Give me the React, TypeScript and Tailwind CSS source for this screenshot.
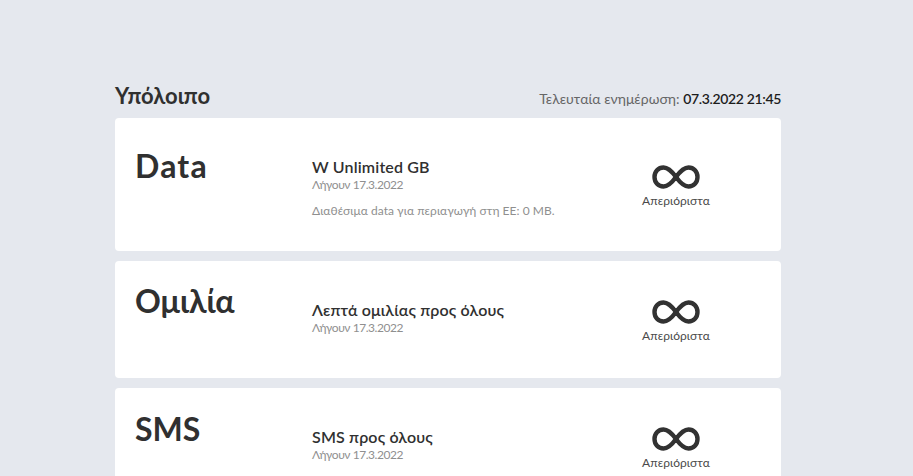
const FONT = "font-['Lato','Noto_Sans',sans-serif]";

function Infinity48() {
  return (
    <svg width="48" height="24" viewBox="0 0 48 24" fill="none" className="block">
      <path
        d="M24 12C20 6.5 16.5 2.5 11.5 2.5C6.2 2.5 2.5 6.7 2.5 12C2.5 17.3 6.2 21.5 11.5 21.5C16.5 21.5 20 17.5 24 12C28 6.5 31.5 2.5 36.5 2.5C41.8 2.5 45.5 6.7 45.5 12C45.5 17.3 41.8 21.5 36.5 21.5C31.5 21.5 28 17.5 24 12Z"
        stroke="#323232"
        strokeWidth="4.4"
      />
    </svg>
  );
}

function Card({
  title,
  name,
  extra,
  height,
  titleTop,
  nameTop,
  iconTop,
}: {
  title: string;
  name: string;
  extra?: string;
  height: string;
  titleTop: string;
  nameTop: string;
  iconTop: string;
}) {
  return (
    <div className={`flex rounded bg-white pl-5 ${height}`}>
      <div className={`w-[177px] shrink-0 ${titleTop}`}>
        <h2 className="text-[32px] leading-[38px] font-bold text-[#303030]">{title}</h2>
      </div>
      <div className={`w-[313px] shrink-0 ${nameTop}`}>
        <div className="text-[16px] leading-[20px] font-semibold tracking-[0.15px] text-[#303030]">{name}</div>
        <div className="text-[12px] leading-[15px] tracking-[-0.45px] text-[#8f8f8f]">Λήγουν 17.3.2022</div>
        {extra && <div className="mt-[11px] text-[12px] leading-[15px] tracking-[0.05px] text-[#8f8f8f]">{extra}</div>}
      </div>
      <div className={`flex w-[102px] shrink-0 flex-col items-center ${iconTop}`}>
        <Infinity48 />
        <div className="mt-[4px] text-[12px] leading-[15px] tracking-[0.05px] text-[#4a4a4a]">Απεριόριστα</div>
      </div>
    </div>
  );
}

export default function App() {
  return (
    <div className={`h-[476px] overflow-hidden bg-[#e5e8ee] pt-[81px] pl-[115px] ${FONT}`}>
      <div className="w-[666px]">
        <div className="mb-[8px] flex h-[29px] items-center justify-between">
          <h1 className="text-[22px] leading-[26px] font-bold text-[#303030]">Υπόλοιπο</h1>
          <div className="pt-[7px] text-[14px] leading-[18px] tracking-[0.05px] text-[#666666]">
            Τελευταία ενημέρωση: <span className="font-semibold tracking-[-0.35px] text-[#1c1c1c]">07.3.2022 21:45</span>
          </div>
        </div>
        <div className="flex flex-col gap-[10px]">
          <Card
            title="Data"
            name="W Unlimited GB"
            extra="Διαθέσιμα data για περιαγωγή στη ΕΕ: 0 MB."
            height="h-[133px]"
            titleTop="pt-[29px] tracking-[1.2px]"
            nameTop="pt-[39px]"
            iconTop="pt-[47px]"
          />
          <Card
            title="Ομιλία"
            name="Λεπτά ομιλίας προς όλους"
            height="h-[117px]"
            titleTop="pt-[21px]"
            nameTop="pt-[39px]"
            iconTop="pt-[39px]"
          />
          <Card
            title="SMS"
            name="SMS προς όλους"
            height="h-[117px]"
            titleTop="pt-[22px]"
            nameTop="pt-[39px]"
            iconTop="pt-[39px]"
          />
        </div>
      </div>
    </div>
  );
}
